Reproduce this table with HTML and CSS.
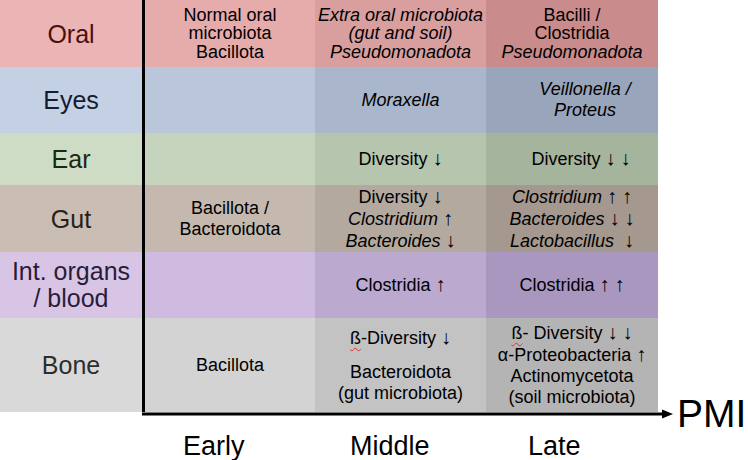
FILE: index.html
```html
<!DOCTYPE html>
<html lang="en">
<head>
<meta charset="utf-8">
<title>Microbiota succession by PMI</title>
<link rel="stylesheet" href="styles.css">
</head>
<body>
<div class="chart">
  <div class="table">
    <div class="axis-v"></div>

    <div class="cell label oral">Oral</div>
    <div class="cell oral early lh-tight">Normal oral<br>microbiota<br>Bacillota</div>
    <div class="cell oral middle lh-tight"><i>Extra oral microbiota<br>(gut and soil)<br>Pseudomonadota</i></div>
    <div class="cell oral late lh-tight">Bacilli /<br>Clostridia<br><i>Pseudomonadota</i></div>

    <div class="cell label eyes">Eyes</div>
    <div class="cell eyes early"></div>
    <div class="cell eyes middle"><i>Moraxella</i></div>
    <div class="cell eyes late shift-r"><i>Veillonella /<br>Proteus</i></div>

    <div class="cell label ear">Ear</div>
    <div class="cell ear early"></div>
    <div class="cell ear middle"><span>Diversity <span class="ar">↓</span></span></div>
    <div class="cell ear late shift-r2"><span>Diversity <span class="ar">↓</span> <span class="ar">↓</span></span></div>

    <div class="cell label gut">Gut</div>
    <div class="cell gut early">Bacillota /<br>Bacteroidota</div>
    <div class="cell gut middle"><span>Diversity <span class="ar">↓</span></span><span><i>Clostridium</i> <span class="ar">↑</span></span><span><i>Bacteroides</i> <span class="ar">↓</span></span></div>
    <div class="cell gut late"><span><i>Clostridium</i> <span class="ar">↑</span> <span class="ar">↑</span></span><span><i>Bacteroides</i> <span class="ar">↓</span> <span class="ar">↓</span></span><span class="pre"><i>Lactobacillus</i>  <span class="ar">↓</span></span></div>

    <div class="cell label int lh-label">Int. organs<br>/ blood</div>
    <div class="cell int early"></div>
    <div class="cell int middle"><span>Clostridia <span class="ar">↑</span></span></div>
    <div class="cell int late"><span>Clostridia <span class="ar">↑</span> <span class="ar">↑</span></span></div>

    <div class="cell label bone">Bone</div>
    <div class="cell bone early">Bacillota</div>
    <div class="cell bone middle"><span class="gap-after"><span class="spell">ß</span>-Diversity <span class="ar">↓</span></span><span>Bacteroidota</span><span>(gut microbiota)</span></div>
    <div class="cell bone late"><span><span class="spell">ß</span>- Diversity <span class="ar">↓</span> <span class="ar">↓</span></span><span>α-Proteobacteria <span class="ar">↑</span></span><span>Actinomycetota</span><span>(soil microbiota)</span></div>
  </div>

  <div class="axis-h">
    <svg class="arrow" width="531" height="12" viewBox="0 0 531 12" aria-hidden="true">
      <line x1="0" y1="6" x2="524" y2="6" stroke="#000" stroke-width="3"/>
      <polygon points="520,1.5 531,6 520,10.5" fill="#000"/>
    </svg>
    <span class="pmi">PMI</span>
  </div>

  <div class="stages">
    <span>Early</span>
    <span>Middle</span>
    <span>Late</span>
  </div>
</div>
</body>
</html>
```

FILE: styles.css
```css
html, body {
  margin: 0;
  padding: 0;
  background: #fff;
}

body {
  width: 748px;
  height: 460px;
  overflow: hidden;
  font-family: "Liberation Sans", Arial, sans-serif;
  color: #000;
}

.chart {
  width: 748px;
}

.table {
  display: grid;
  grid-template-columns: 142px 3px 170px 171px 172px;
  grid-template-rows: 67px 66px 52px 67px 66px 94px;
  width: 658px;
}

.axis-v {
  grid-column: 2;
  grid-row: 1 / -1;
  background: #000;
}

.cell {
  display: flex;
  flex-direction: column;
  align-items: center;
  justify-content: center;
  text-align: center;
  font-size: 18px;
  line-height: 21px;
  white-space: nowrap;
}

.cell span {
  display: block;
}

.cell .ar {
  display: inline;
  font-size: 20px;
  line-height: 1;
  color: #000;
}

.cell .spell {
  display: inline;
  text-decoration: underline wavy #e0322e;
  text-decoration-thickness: 1px;
  text-underline-offset: 3px;
}

.pre {
  white-space: pre;
}

.gap-after {
  margin-bottom: 13px;
}

.lh-tight {
  line-height: 18.5px;
}

.shift-r {
  padding-left: 26px;
}

.shift-r2 {
  padding-left: 18px;
}

.label {
  font-size: 25px;
  line-height: 26px;
}

.lh-label {
  line-height: 27px;
}

/* Row colours */
.oral.label { background: #ecb5b5; color: #4a1010; }
.oral.early { background: #e6abab; }
.oral.middle { background: #d99f9f; }
.oral.late { background: #c98b8b; }

.eyes.label { background: #c4d0e3; color: #141c30; }
.eyes.early { background: #bac6da; }
.eyes.middle { background: #a9b6cb; }
.eyes.late { background: #98a5ba; }

.ear.label { background: #cedcc6; color: #1b2914; }
.ear.early { background: #c6d4be; }
.ear.middle { background: #b6c5ad; }
.ear.late { background: #a5b49c; }

.gut.label { background: #c9bdb4; color: #2a1f17; }
.gut.early { background: #c5b9af; }
.gut.middle { background: #b4a99f; }
.gut.late { background: #a4988f; }

.int.label { background: #d8c5e6; color: #2a1c38; }
.int.early { background: #cebbdf; }
.int.middle { background: #bca9d0; }
.int.late { background: #a997c0; }

.bone.label { background: #d9d9d9; color: #2e2e2e; }
.bone.early { background: #d3d3d3; }
.bone.middle { background: #c3c3c3; }
.bone.late { background: #b4b4b4; }

/* Horizontal axis */
.axis-h {
  display: flex;
  align-items: center;
  height: 40px;
  margin: -18.5px 0 0 142px;
  white-space: nowrap;
}

.arrow {
  flex-shrink: 0;
  display: block;
}

.pmi {
  flex-shrink: 0;
  margin-left: 4px;
  font-size: 39px;
  line-height: 40px;
  color: #000;
}

.stages {
  display: grid;
  grid-template-columns: 167px 178px auto;
  padding-left: 183px;
  margin-top: -3px;
  font-size: 27px;
  line-height: 30px;
  color: #000;
}
```
